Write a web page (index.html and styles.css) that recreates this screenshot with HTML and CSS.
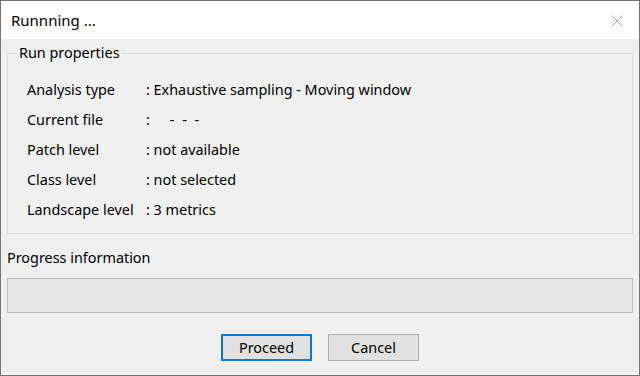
FILE: index.html
```html
<!DOCTYPE html>
<html lang="en">
<head>
    <meta charset="UTF-8">
    <title>Runnning ...</title>
    <link rel="stylesheet" href="styles.css">
</head>
<body>
    <div class="window">
        <div class="titlebar">
            <span class="title">Runnning ...</span>
            <svg class="close" width="12" height="12" viewBox="0 0 12 12">
                <path d="M0.5 0.5 L11.5 11.5 M11.5 0.5 L0.5 11.5" stroke="#a5a5a5" stroke-width="1" fill="none"/>
            </svg>
        </div>
        <div class="content">
            <fieldset class="group">
                <legend>Run properties</legend>
                <div class="rows">
                    <div class="row"><span class="label">Analysis type</span><span class="value">: Exhaustive sampling - Moving window</span></div>
                    <div class="row"><span class="label">Current file</span><span class="value">:<span class="dashes">- - -</span></span></div>
                    <div class="row"><span class="label">Patch level</span><span class="value">: not available</span></div>
                    <div class="row"><span class="label">Class level</span><span class="value">: not selected</span></div>
                    <div class="row"><span class="label">Landscape level</span><span class="value">: 3 metrics</span></div>
                </div>
            </fieldset>
            <div class="progress-label">Progress information</div>
            <div class="progress-bar"></div>
            <div class="buttons">
                <button class="btn default">Proceed</button>
                <button class="btn">Cancel</button>
            </div>
        </div>
    </div>
</body>
</html>
```

FILE: styles.css
```css
* {
    margin: 0;
    padding: 0;
    box-sizing: border-box;
}

body {
    margin: 0;
    font-family: 'Noto Sans', 'Open Sans', sans-serif;
    font-size: 14.4px;
    color: #000;
    background: #fff;
}

.window {
    width: 640px;
    height: 376px;
    border: 1px solid #747474;
    display: flex;
    flex-direction: column;
    background: #f0f0f0;
}

.titlebar {
    height: 38px;
    background: #fff;
    display: flex;
    align-items: center;
    justify-content: space-between;
    padding: 0 16px 0 10px;
    flex-shrink: 0;
}

.title {
    font-size: 15px;
}

.close {
    margin-top: 1px;
}

.content {
    flex: 1;
    padding: 0 6px;
    display: flex;
    flex-direction: column;
}

.group {
    margin-top: 4px;
    border: 1px solid #dcdcdc;
    padding: 0;
}

.group legend {
    margin-left: 9px;
    padding: 0 2px;
    line-height: 20px;
}

.rows {
    padding: 11px 0 9px 19px;
}

.row {
    height: 30px;
    display: flex;
    align-items: center;
}

.label {
    width: 119px;
}

.dashes {
    margin-left: 20px;
    letter-spacing: 2px;
}

.progress-label {
    margin-top: 14px;
    line-height: 20px;
}

.progress-bar {
    margin-top: 10px;
    height: 35px;
    background: #e6e6e6;
    border: 1px solid #bcbcbc;
}

.buttons {
    display: flex;
    justify-content: center;
    gap: 16px;
    margin-top: 21px;
}

.btn {
    width: 91px;
    height: 27px;
    font-family: inherit;
    font-size: 14.4px;
    color: #000;
    background: #e1e1e1;
    border: 1px solid #adadad;
}

.btn.default {
    border: 2px solid #0078d7;
}
```
